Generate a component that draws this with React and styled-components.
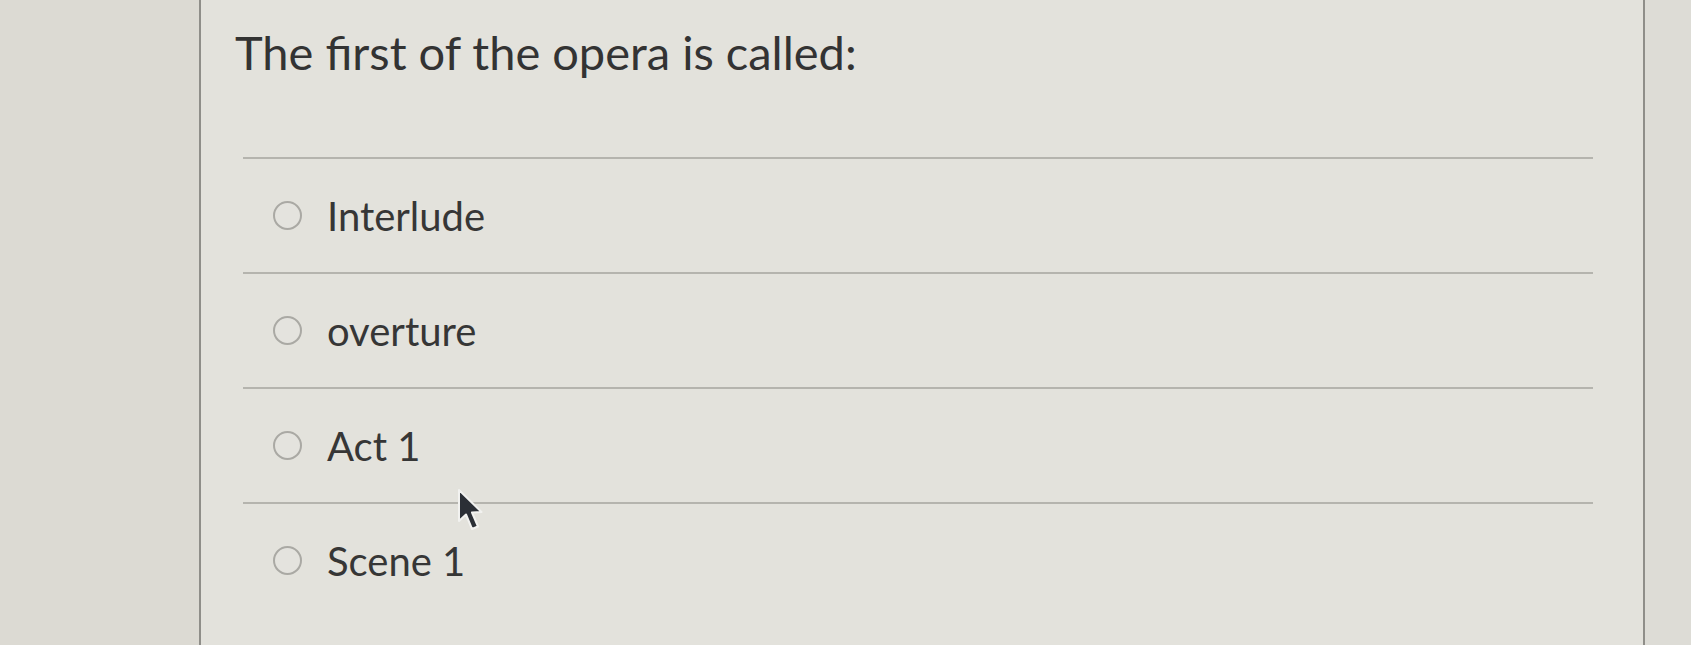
import React from 'react';
import styled, { createGlobalStyle } from 'styled-components';

const GlobalStyle = createGlobalStyle`
  html, body {
    margin: 0;
    padding: 0;
    background: #dedcd6;
  }
  body {
    font-family: 'Lato', 'Open Sans', sans-serif;
    color: #383838;
  }
`;

const answers = ['Interlude', 'overture', 'Act 1', 'Scene 1'];

const Page = styled.div`
  display: flex;
  height: 645px;
  overflow: hidden;
`;

const Sidebar = styled.aside`
  width: 199px;
  flex-shrink: 0;
  background: #dcdad3;
  border-right: 2px solid #8f8e89;
`;

const Gutter = styled.div`
  width: 46px;
  flex-shrink: 0;
  background: #dddcd6;
  border-left: 2px solid #8f8e89;
`;

const Question = styled.main`
  flex: 1;
  position: relative;
  background: #e3e2dc;
  padding: 0 50px 0 42px;
`;

const QuestionText = styled.h1`
  margin: 0 0 0 -8px;
  padding: 20px 0 0 0;
  height: 157px;
  box-sizing: border-box;
  font-size: 47px;
  font-weight: 400;
  line-height: 64px;
  color: #333;
`;

const AnswerList = styled.ul`
  list-style: none;
  margin: 0;
  padding: 0;
`;

const Answer = styled.li`
  display: flex;
  align-items: center;
  gap: 25px;
  height: 115px;
  border-top: 2px solid #b5b4ae;
  padding-left: 30px;
  box-sizing: border-box;
`;

const Radio = styled.span`
  width: 25px;
  height: 25px;
  border-radius: 50%;
  border: 2px solid #aaa9a4;
  background: #e4e3de;
  flex-shrink: 0;
`;

const Label = styled.span`
  font-size: 40px;
  color: #363636;
`;

const Pointer = styled.svg`
  position: absolute;
  left: 256px;
  top: 488px;
  width: 26px;
  height: 44px;
`;

export default function App() {
  return (
    <>
      <GlobalStyle />
      <Page>
        <Sidebar />
        <Question>
          <QuestionText>The first of the opera is called:</QuestionText>
          <AnswerList>
            {answers.map((a) => (
              <Answer key={a}>
                <Radio />
                <Label>{a}</Label>
              </Answer>
            ))}
          </AnswerList>
          <Pointer viewBox="0 0 26 44">
            <path
              d="M2 2 L2 33 L9 26.5 L15 41 L21 38.5 L15 24.5 L24.5 24 Z"
              fill="#2b2f36"
              stroke="#f2f2f0"
              strokeWidth="2"
              strokeLinejoin="round"
            />
          </Pointer>
        </Question>
        <Gutter />
      </Page>
    </>
  );
}
